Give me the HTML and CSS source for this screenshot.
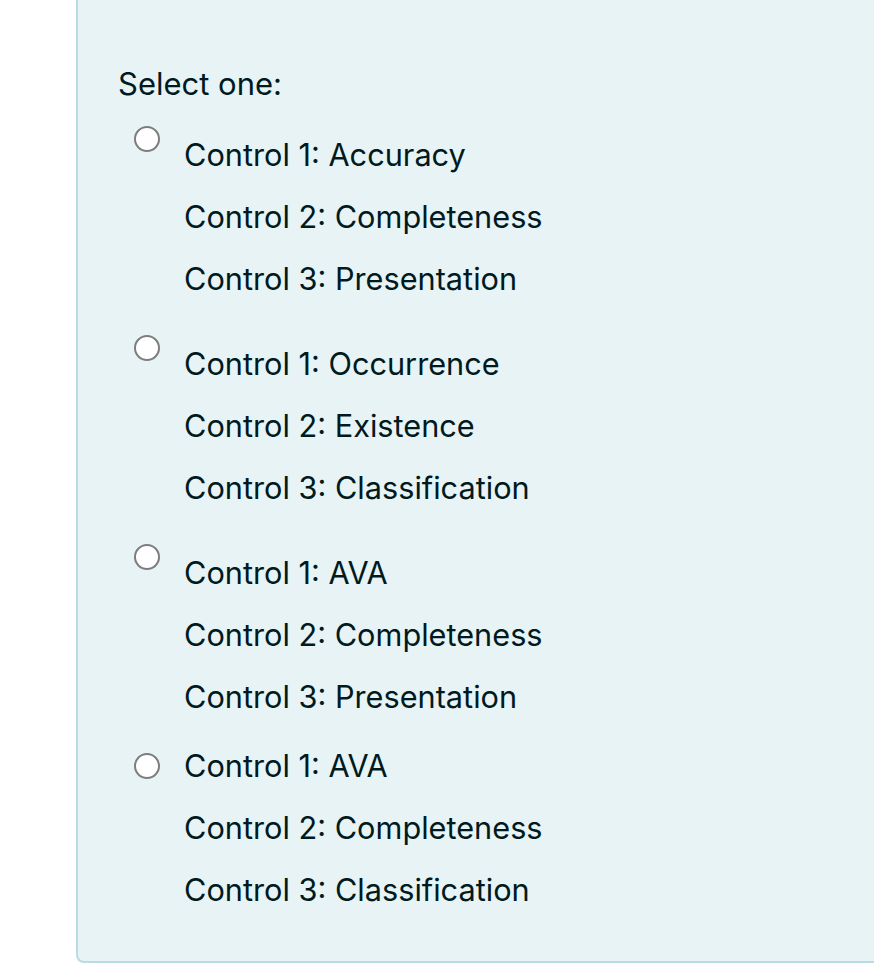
FILE: index.html
```html
<!DOCTYPE html>
<html lang="en">
<head>
<meta charset="utf-8">
<title>Select one</title>
<link rel="stylesheet" href="styles.css">
</head>
<body>
<div class="formulation">
  <div class="prompt">Select one:</div>
  <div class="answers">
    <div class="option option--para">
      <input class="radio" type="radio" name="q">
      <div class="label">
        <p>Control 1: Accuracy</p>
        <p>Control 2: Completeness</p>
        <p>Control 3: Presentation</p>
      </div>
    </div>
    <div class="option option--para">
      <input class="radio" type="radio" name="q">
      <div class="label">
        <p>Control 1: Occurrence</p>
        <p>Control 2: Existence</p>
        <p>Control 3: Classification</p>
      </div>
    </div>
    <div class="option option--para">
      <input class="radio" type="radio" name="q">
      <div class="label">
        <p>Control 1: AVA</p>
        <p>Control 2: Completeness</p>
        <p>Control 3: Presentation</p>
      </div>
    </div>
    <div class="option">
      <input class="radio" type="radio" name="q">
      <div class="label">
        <p>Control 1: AVA</p>
        <p>Control 2: Completeness</p>
        <p>Control 3: Classification</p>
      </div>
    </div>
  </div>
</div>
</body>
</html>
```
FILE: styles.css
```css
html, body {
  margin: 0;
  padding: 0;
  background: #ffffff;
}

body {
  font-family: Inter, "Liberation Sans", Arial, sans-serif;
  color: #001a1e;
  overflow: hidden;
}

.formulation {
  margin-left: 76px;
  height: 963px;
  box-sizing: border-box;
  background: #e7f3f5;
  border-left: 2px solid #b8dce2;
  border-bottom: 2px solid #b8dce2;
  border-bottom-left-radius: 8px;
  padding: 61px 0 0 40px;
}

.prompt {
  font-size: 31px;
  line-height: 46px;
  margin-bottom: 1px;
}

.answers {
  display: flex;
  flex-direction: column;
  gap: 7px;
}

.option {
  display: flex;
  align-items: flex-start;
  padding-left: 16px;
}

.radio {
  -webkit-appearance: none;
  appearance: none;
  margin: 18px 0 0 0;
  width: 26px;
  height: 26px;
  box-sizing: border-box;
  border: 2px solid #7d7d7d;
  border-radius: 50%;
  background: #ffffff;
  flex: none;
}

.label {
  margin-left: 24px;
  font-size: 30.7px;
  line-height: 62px;
}

.option--para .label {
  padding-top: 16px;
}

.label p {
  margin: 0;
}
```
